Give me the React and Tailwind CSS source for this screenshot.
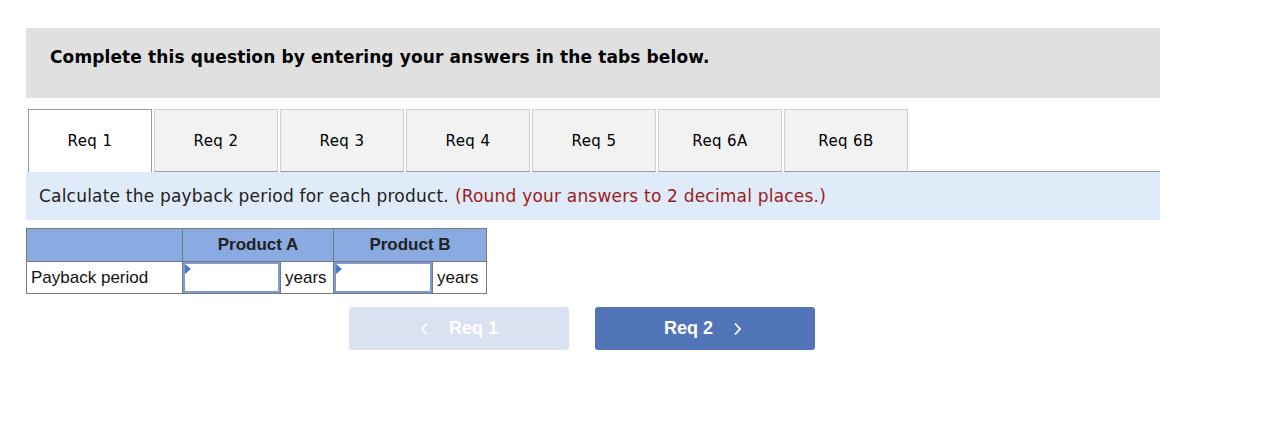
import React from 'react';

const tabs = ['Req 1', 'Req 2', 'Req 3', 'Req 4', 'Req 5', 'Req 6A', 'Req 6B'];

const Chevron = ({ dir }) => (
    <svg width="9" height="14" viewBox="0 0 9 14" fill="none">
        {dir === 'left' ? (
            <polyline points="7,1.5 2,7 7,12.5" stroke="currentColor" strokeWidth="1.8" />
        ) : (
            <polyline points="2,1.5 7,7 2,12.5" stroke="currentColor" strokeWidth="1.8" />
        )}
    </svg>
);

const AnswerInput = () => (
    <div className="relative h-[31px] w-full border-2 border-[#7d9bd2] bg-white">
        {/* little blue marker in the corner */}
        <span className="absolute left-0 top-0 h-0 w-0 border-b-[5px] border-l-[6px] border-t-[5px] border-b-transparent border-l-[#4a78c8] border-t-transparent"></span>
    </div>
);

export default function App() {
    return (
        <div className="min-h-[424px] bg-white pl-[26px] pt-[28px]" style={{ fontFamily: '"DejaVu Sans", Verdana, sans-serif' }}>
            <div className="w-[1134px]">
                <div className="h-[70px] bg-[#e0e0e0] pl-[24px] pt-[17px]">
                    <p className="text-[17px] font-bold tracking-[0.12px] text-black">Complete this question by entering your answers in the tabs below.</p>
                </div>

                <div className="mt-[11px] flex">
                    <div className="w-[2px] border-b border-transparent"></div>
                    {tabs.map((t, i) => (
                        <div
                            key={t}
                            className={
                                i === 0
                                    ? 'flex h-[63px] w-[124px] items-center justify-center border border-b-0 border-[#9a9a9a] bg-white pt-[1px] text-[15px] tracking-[0.4px] text-black'
                                    : 'ml-[2px] flex h-[63px] w-[124px] items-center justify-center border border-[#cfcfcf] border-b-[#9a9a9a] bg-[#f2f2f2] pt-[1px] text-[15px] tracking-[0.4px] text-black'
                            }
                        >
                            {t}
                        </div>
                    ))}
                    <div className="flex-1 border-b border-[#9a9a9a]"></div>
                </div>

                <div className="flex h-[48px] items-center bg-[#dfebf8] pl-[13px] pt-[2px] text-[17px] tracking-[0.2px] text-[#222]">
                    <span>Calculate the payback period for each product.</span>
                    <span className="ml-[6px] text-[#9e1a1a]">(Round your answers to 2 decimal places.)</span>
                </div>

                <table className="mt-[8px] border-collapse text-[17px]" style={{ fontFamily: '"Liberation Sans", Arial, sans-serif' }}>
                    <tbody>
                        <tr className="h-[33px] bg-[#8aabe1]">
                            <td className="w-[156px] border border-[#7a7a7a]"></td>
                            <td colSpan={2} className="border border-[#7a7a7a] text-center font-bold text-[#222]">Product A</td>
                            <td colSpan={2} className="border border-[#7a7a7a] text-center font-bold text-[#222]">Product B</td>
                        </tr>
                        <tr className="h-[32px] bg-white">
                            <td className="border border-[#7a7a7a] pl-[4px] text-[17px] text-[#111]">Payback period</td>
                            <td className="w-[98px] border border-[#7a7a7a] p-0"><AnswerInput /></td>
                            <td className="w-[53px] border border-[#7a7a7a] px-[4px] text-[17px] text-[#111]">years</td>
                            <td className="w-[99px] border border-[#7a7a7a] p-0"><AnswerInput /></td>
                            <td className="w-[54px] border border-[#7a7a7a] px-[4px] text-[17px] text-[#111]">years</td>
                        </tr>
                    </tbody>
                </table>

                <div className="ml-[323px] mt-[13px] flex gap-[26px]" style={{ fontFamily: '"Liberation Sans", Arial, sans-serif' }}>
                    <button className="flex h-[43px] w-[220px] items-center justify-center gap-[20px] rounded-[3px] bg-[#d9e2f1] text-[18px] font-bold text-white">
                        <Chevron dir="left" />
                        <span>Req 1</span>
                    </button>
                    <button className="flex h-[43px] w-[220px] items-center justify-center gap-[20px] rounded-[3px] bg-[#5275b9] pr-[4px] text-[18px] font-bold text-white">
                        <span>Req 2</span>
                        <Chevron dir="right" />
                    </button>
                </div>
            </div>
        </div>
    );
}
